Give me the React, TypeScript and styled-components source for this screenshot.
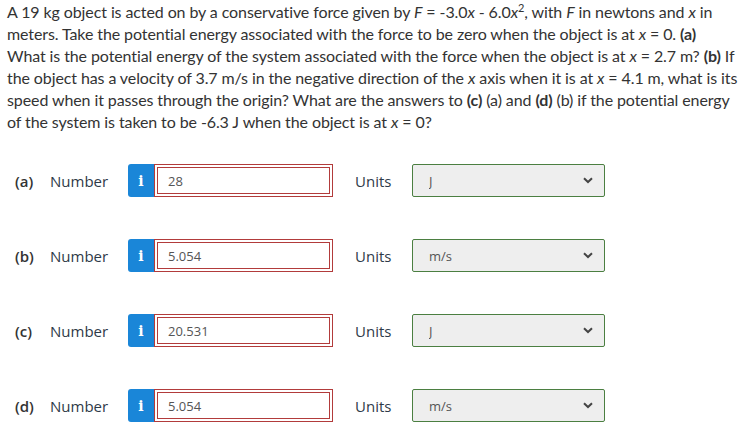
import styled, { createGlobalStyle } from "styled-components";

const GlobalStyle = createGlobalStyle`
  body {
    margin: 0;
    background: #fff;
  }
`;

const Page = styled.div`
  padding: 1px 0 0 7px;
`;

const Question = styled.p`
  margin: 0;
  font-family: Lato, "Liberation Sans", sans-serif;
  font-size: 16px;
  line-height: 22px;
  letter-spacing: -0.1px;
  color: #333;
  i {
    font-style: italic;
  }
  b {
    font-weight: 700;
  }
  sup {
    font-size: 11px;
    line-height: 0;
    vertical-align: 6px;
  }
`;

const Line = styled.span`
  display: block;
  white-space: nowrap;
`;

const Form = styled.div`
  margin-top: 31px;
  display: flex;
  flex-direction: column;
  gap: 42px;
  font-family: "Open Sans", "Liberation Sans", sans-serif;
`;

const Row = styled.div`
  display: flex;
  align-items: center;
  height: 33px;
  padding-left: 8px;
`;

const Part = styled.span`
  width: 35px;
  font-size: 15px;
  font-weight: 600;
  color: #333;
`;

const Label = styled.span<{ $w: number; $ml?: number }>`
  width: ${(p) => p.$w}px;
  margin-left: ${(p) => p.$ml ?? 0}px;
  font-size: 15px;
  color: #2e3a48;
`;

const InfoButton = styled.div`
  width: 26px;
  height: 33px;
  background: #1a86d8;
  border-radius: 3px 0 0 3px;
  display: flex;
  align-items: center;
  justify-content: center;
  color: #fff;
  font-family: "DejaVu Serif", serif;
  font-weight: 700;
  font-size: 14px;
`;

const Input = styled.input`
  box-sizing: border-box;
  width: 179px;
  height: 33px;
  border: 1px solid #b23b3b;
  outline: 1px solid #b23b3b;
  outline-offset: -4px;
  padding: 0 0 0 13px;
  font-family: "Open Sans", "Liberation Sans", sans-serif;
  font-size: 13px;
  color: #555;
  background: #fff;
`;

const SelectWrap = styled.div`
  position: relative;
  width: 193px;
  height: 33px;
`;

const Select = styled.select`
  appearance: none;
  box-sizing: border-box;
  width: 100%;
  height: 100%;
  border: 1px solid #4b7f41;
  border-radius: 2px;
  background: #eeeeee;
  padding: 0 0 0 16px;
  font-family: "Open Sans", "Liberation Sans", sans-serif;
  font-size: 13px;
  color: #555;
`;

const Chevron = styled.svg`
  position: absolute;
  right: 12px;
  top: 13px;
  pointer-events: none;
`;

const rows = [
  { part: "(a)", value: "28", unit: "J" },
  { part: "(b)", value: "5.054", unit: "m/s" },
  { part: "(c)", value: "20.531", unit: "J" },
  { part: "(d)", value: "5.054", unit: "m/s" },
];

export default function App() {
  return (
    <Page>
      <GlobalStyle />
      <Question>
        <Line>
          A 19 kg object is acted on by a conservative force given by <i>F</i> = -3.0<i>x</i> - 6.0<i>x</i>
          <sup>2</sup>, with <i>F</i> in newtons and <i>x</i> in
        </Line>
        <Line>
          meters. Take the potential energy associated with the force to be zero when the object is at{" "}
          <i>x</i> = 0. <b>(a)</b>
        </Line>
        <Line>
          What is the potential energy of the system associated with the force when the object is at{" "}
          <i>x</i> = 2.7 m? <b>(b)</b> If
        </Line>
        <Line>
          the object has a velocity of 3.7 m/s in the negative direction of the <i>x</i> axis when it is at{" "}
          <i>x</i> = 4.1 m, what is its
        </Line>
        <Line>
          speed when it passes through the origin? What are the answers to <b>(c)</b> (a) and <b>(d)</b> (b)
          if the potential energy
        </Line>
        <Line>
          of the system is taken to be -6.3 J when the object is at <i>x</i> = 0?
        </Line>
      </Question>
      <Form>
        {rows.map((r) => (
          <Row key={r.part}>
            <Part>{r.part}</Part>
            <Label $w={78}>Number</Label>
            <InfoButton>i</InfoButton>
            <Input defaultValue={r.value} />
            <Label $w={57} $ml={22}>
              Units
            </Label>
            <SelectWrap>
              <Select defaultValue={r.unit}>
                <option value={r.unit}>{r.unit}</option>
              </Select>
              <Chevron width="10" height="7" viewBox="0 0 10 7">
                <path d="M1 1.2 L5 5 L9 1.2" fill="none" stroke="#444" strokeWidth="2" />
              </Chevron>
            </SelectWrap>
          </Row>
        ))}
      </Form>
    </Page>
  );
}
